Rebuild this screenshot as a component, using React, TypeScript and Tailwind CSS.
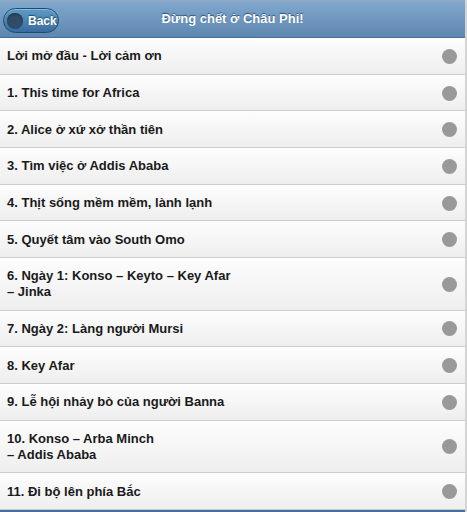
const items: string[][] = [
  ["Lời mở đầu - Lời cảm ơn"],
  ["1. This time for Africa"],
  ["2. Alice ở xứ xở thần tiên"],
  ["3. Tìm việc ở Addis Ababa"],
  ["4. Thịt sống mềm mềm, lành lạnh"],
  ["5. Quyết tâm vào South Omo"],
  ["6. Ngày 1: Konso – Keyto – Key Afar", "– Jinka"],
  ["7. Ngày 2: Làng người Mursi"],
  ["8. Key Afar"],
  ["9. Lễ hội nhảy bò của người Banna"],
  ["10. Konso – Arba Minch", "– Addis Ababa"],
  ["11. Đi bộ lên phía Bắc"],
];

export default function App() {
  return (
    <div
      className="w-[467px] h-[512px] overflow-hidden bg-[#f0f0f0] border-r-2 border-[#d5d5d5]"
      style={{ fontFamily: '"Liberation Sans", Arial, sans-serif' }}
    >
      <div className="relative h-[38px] flex items-center justify-center border-t border-b border-t-[#9aa8b5] border-b-[#456f9a] bg-gradient-to-b from-[#81a8ce] to-[#5e87b0]">
        <button className="absolute left-[3px] top-[7px] h-[25px] w-[56px] flex items-center gap-[5px] pl-[3px] rounded-full border border-[#145072] bg-gradient-to-b from-[#5f9cc5] to-[#396b9e] shadow-[inset_0_1px_0_rgba(255,255,255,0.3)]">
          <span className="w-[16px] h-[16px] rounded-full bg-[#2f4c69] shadow-[inset_0_1px_2px_rgba(0,0,0,0.4)]" />
          <span className="text-[12px] font-bold text-white [text-shadow:0_-1px_1px_#145072]">
            Back
          </span>
        </button>
        <h1 className="text-[13px] font-bold text-white [text-shadow:0_-1px_1px_#254f7a]">
          Đừng chết ở Châu Phi!
        </h1>
      </div>

      <ul>
        {items.map((lines, i) => (
          <li
            key={i}
            className="flex items-center justify-between pl-[7px] pr-[8px] pt-[9.4px] pb-[9.27px] border-b border-[#cccccc] border-t border-t-white bg-gradient-to-b from-[#fdfdfd] to-[#eeeeee]"
          >
            <span className="text-[13px] leading-[16px] font-bold text-[#1a1a1a]">
              {lines.map((l, j) => (
                <span key={j} className="block">
                  {l}
                </span>
              ))}
            </span>
            <span className="w-[15px] h-[15px] rounded-full bg-[#999999] shrink-0" />
          </li>
        ))}
      </ul>

      <div className="h-[30px] border-t-2 border-[#456f9a] bg-gradient-to-b from-[#e9eef3] to-[#c9d3dd]" />
    </div>
  );
}
